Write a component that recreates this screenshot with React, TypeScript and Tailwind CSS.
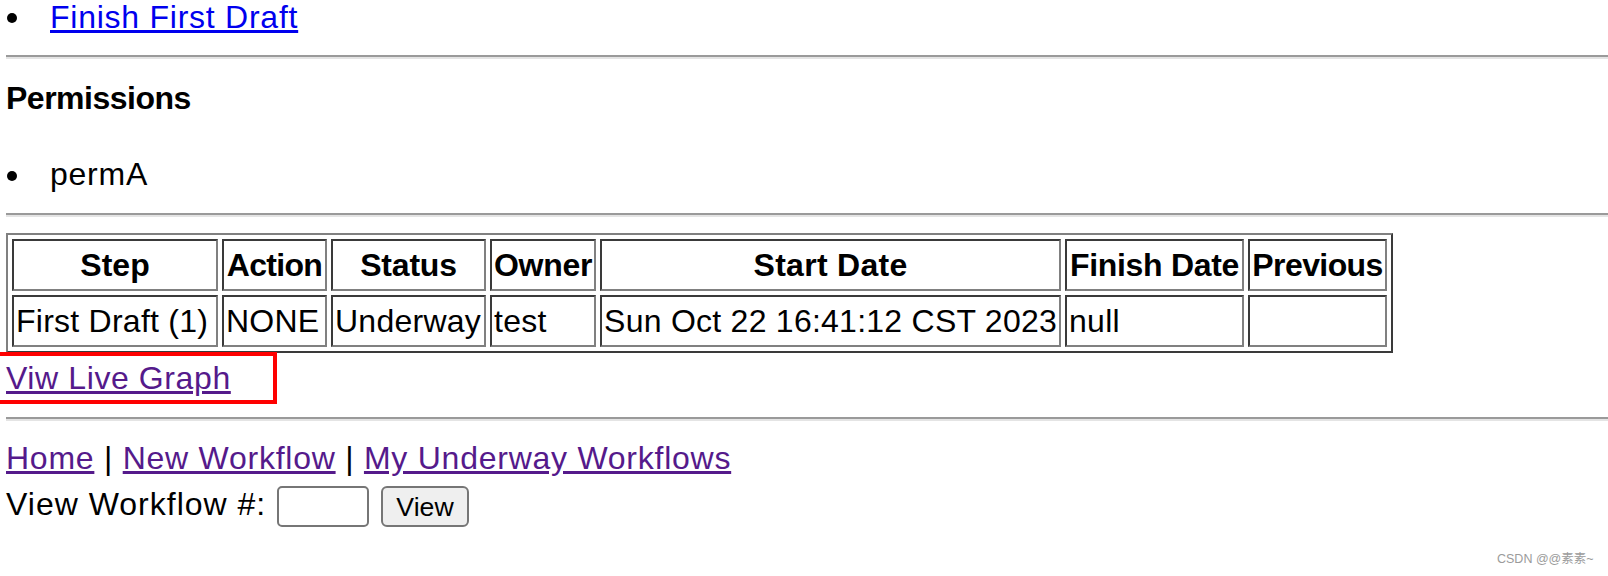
const visited = 'text-[#551a8b] underline'

function Rule({ className = '' }: { className?: string }) {
  return (
    <hr
      className={`h-0 border-0 border-t-2 border-b-2 border-t-[#9a9a9a] border-b-[#e4e4e4] ${className}`}
    />
  )
}

function Bullet({ className = '' }: { className?: string }) {
  return <span className={`ml-px h-[10px] w-[10px] shrink-0 rounded-full bg-black ${className}`} />
}

// header widths + letter-spacing tuned per column
const columns = [
  { label: 'Step', w: 'w-[206px] tracking-normal' },
  { label: 'Action', w: 'w-[105px] tracking-[-0.7px]' },
  { label: 'Status', w: 'w-[155px] tracking-[-0.2px]' },
  { label: 'Owner', w: 'w-[106px] tracking-[-0.3px]' },
  { label: 'Start Date', w: 'w-[459px] tracking-[0.3px]' },
  { label: 'Finish Date', w: 'w-[179px] tracking-[-0.3px]' },
  { label: 'Previous', w: 'w-[139px] tracking-[-0.6px]' },
]

const row = ['First Draft (1)', 'NONE', 'Underway', 'test', 'Sun Oct 22 16:41:12 CST 2023', 'null', '']

const cell =
  'border-2 border-t-[#3a3a3a] border-l-[#3a3a3a] border-r-[#808080] border-b-[#808080] p-[2px]'

export default function App() {
  return (
    <div className="relative h-[576px] overflow-hidden bg-white pl-[6px] font-['Liberation_Sans',Arial,sans-serif] text-[32px] leading-[44px] tracking-[0.75px] text-black">
      {/* history list */}
      <ul className="-mt-[5px]">
        <li className="flex">
          <Bullet className="mt-[18px]" />
          <a href="#" className="ml-[33px] text-[#0000ee] underline">
            Finish First Draft
          </a>
        </li>
      </ul>

      <Rule className="mt-[16px]" />

      <h4 className="mt-[17px] font-bold tracking-[-0.5px]">Permissions</h4>
      <ul className="mt-[32px]">
        <li className="flex">
          <Bullet className="mt-[19px]" />
          <span className="ml-[33px]">permA</span>
        </li>
      </ul>

      <Rule className="mt-[17px]" />

      {/* steps table */}
      <table className="mt-[16px] border-separate border-spacing-[4px] border-2 border-t-[#808080] border-l-[#808080] border-r-[#3a3a3a] border-b-[#3a3a3a]">
        <thead>
          <tr>
            {columns.map((c) => (
              <th key={c.label} className={`${cell} ${c.w} text-center font-bold`}>
                {c.label}
              </th>
            ))}
          </tr>
        </thead>
        <tbody>
          <tr>
            {row.map((v, i) => (
              <td key={i} className={`${cell} text-left whitespace-nowrap tracking-[0.25px]`}>
                {v}
              </td>
            ))}
          </tr>
        </tbody>
      </table>

      <div className="mt-[3px]">
        <a href="#" className={`${visited} tracking-[0.6px]`}>
          Viw Live Graph
        </a>
      </div>

      <Rule className="mt-[17px]" />

      <div className="mt-[15px]">
        <a href="#" className={visited}>Home</a> | <a href="#" className={visited}>New Workflow</a> |{' '}
        <a href="#" className={visited}>My Underway Workflows</a>
      </div>

      <div className="flex items-start">
        <span className="mt-[2px] w-[271px] shrink-0 tracking-[1px]">View Workflow #:</span>
        <input
          type="text"
          className="mt-[6px] h-[41px] w-[92px] rounded-[5px] border-2 border-[#767676] bg-white px-1 outline-none"
        />
        <button className="ml-[12px] mt-[6px] flex h-[41px] w-[88px] items-center justify-center rounded-[6px] border-2 border-[#767676] bg-[#efefef] text-[26.67px] leading-[30px] tracking-normal">
          View
        </button>
      </div>

      {/* annotation box over the link */}
      <div className="pointer-events-none absolute left-[-4px] top-[352px] h-[52px] w-[281px] border-4 border-[#fe0000]" />

      <div className="absolute left-[1497px] top-[551px] font-['Liberation_Sans','Noto_Sans_CJK_SC',sans-serif] text-[12.5px] leading-[16px] tracking-normal text-[#9b9b9b]">
        CSDN @@素素~
      </div>
    </div>
  )
}
